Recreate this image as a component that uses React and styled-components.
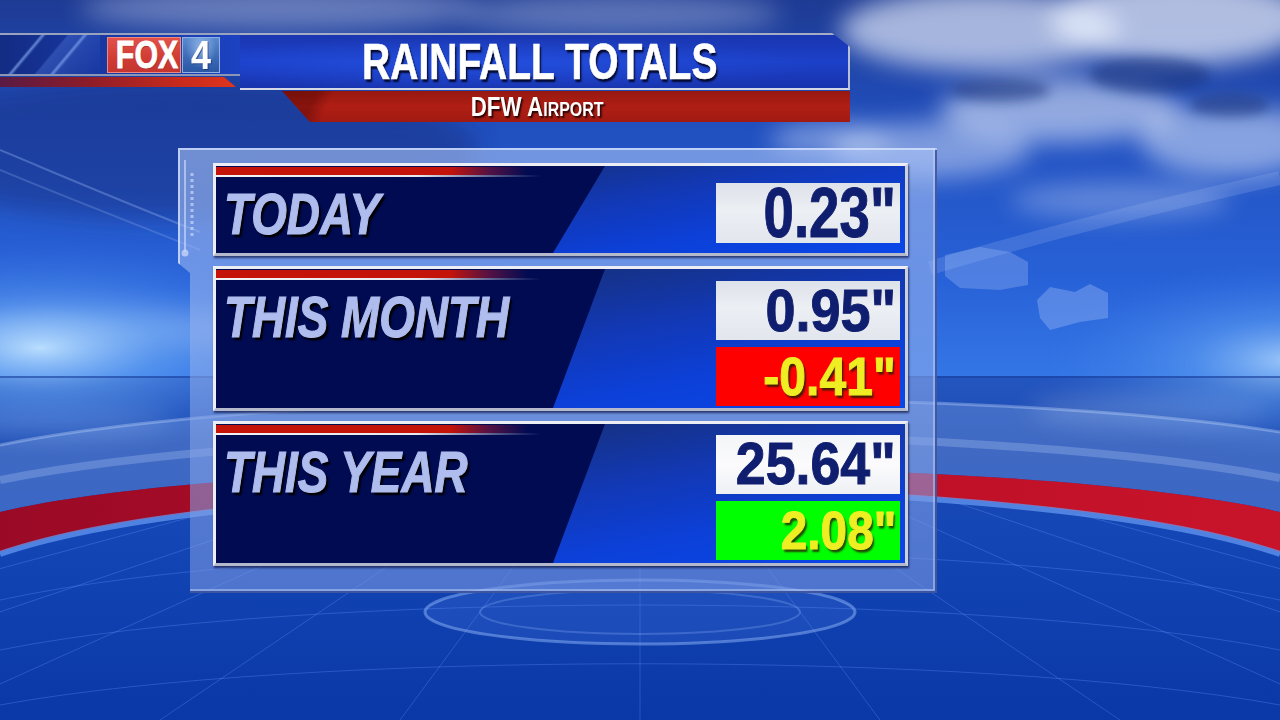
import React from 'react';
import styled, { createGlobalStyle } from 'styled-components';

const GlobalStyle = createGlobalStyle`
  html, body { margin: 0; padding: 0; width: 1280px; height: 720px; overflow: hidden; background: #0a3aa8; }
  body { font-family: "Liberation Sans", Arial, sans-serif; }
`;

const Stage = styled.div`
  position: relative;
  width: 1280px;
  height: 720px;
  overflow: hidden;
`;

const Backdrop = styled.svg`
  position: absolute;
  inset: 0;
  z-index: 0;
  display: block;
`;

const Content = styled.main`
  position: relative;
  z-index: 1;
  display: flex;
  flex-direction: column;
  padding-top: 33px;
`;

const Condensed = styled.span`
  display: inline-block;
  white-space: nowrap;
  transform: scaleX(${(p) => p.$sx || 0.8});
  transform-origin: ${(p) => p.$origin || 'center'} center;
`;

/* ---------- header ---------- */
const Header = styled.header`
  display: flex;
  flex-direction: column;
  width: 850px;
`;

const TopBar = styled.div`
  display: flex;
  height: 57px;
`;

const LeftWing = styled.div`
  width: 240px;
  display: flex;
  flex-direction: column;
`;

const WingStrip = styled.div`
  height: 43px;
  box-sizing: border-box;
  border-top: 2px solid #9aa3bd;
  border-bottom: 2px solid #8c96b4;
  display: flex;
  align-items: center;
  padding-left: 107px;
  background:
    linear-gradient(130deg, transparent 44%, rgba(150, 190, 255, 0.6) 48%, transparent 53%) 6px 0 / 44px 100% no-repeat,
    linear-gradient(130deg, transparent 44%, rgba(150, 190, 255, 0.55) 48%, transparent 53%) 48px 0 / 44px 100% no-repeat,
    linear-gradient(130deg, transparent 50%, rgba(90, 130, 230, 0.35) 52%, transparent 100%) 0 0 / 100px 100% no-repeat,
    linear-gradient(90deg, #132c84 0%, #1838a4 45%, #1c42c2 100%);
`;

const WingRed = styled.div`
  margin-top: 1px;
  height: 10px;
  background: linear-gradient(90deg, #5a1a44 0%, #8a1c2a 35%, #c82a1c 75%, #e0361e 100%);
  clip-path: polygon(0 0, 224px 0, 236px 100%, 0 100%);
`;

const Logo = styled.div`
  display: flex;
  gap: 1px;
  height: 36px;
`;

const FoxBox = styled.div`
  width: 74px;
  height: 36px;
  box-sizing: border-box;
  border: 1px solid #ec8a80;
  background: linear-gradient(180deg, #e2524a 0%, #d03c34 60%, #c43630 100%);
  color: #fff;
  font-weight: bold;
  font-size: 38px;
  line-height: 34px;
  text-align: center;
  -webkit-text-stroke: 0.8px #fff;
  text-shadow: 1px 1px 0 rgba(110, 10, 10, 0.5);
`;

const FourBox = styled.div`
  width: 38px;
  height: 36px;
  box-sizing: border-box;
  border: 1px solid #8fb0e0;
  background:
    radial-gradient(ellipse at 50% 30%, rgba(200, 225, 255, 0.55) 0%, transparent 60%),
    linear-gradient(180deg, #5a8ad0 0%, #3a68b4 60%, #2a58a4 100%);
  color: #fff;
  font-weight: bold;
  font-size: 40px;
  line-height: 35px;
  text-align: center;
  text-shadow: 1px 1px 0 rgba(10, 30, 90, 0.5);
`;

const TitleBox = styled.div`
  flex: 1;
  height: 57px;
  box-sizing: border-box;
  border-top: 2px solid #a4acc6;
  border-bottom: 2px solid #d4d8e4;
  border-right: 2px solid #b8c0d8;
  background:
    radial-gradient(ellipse at 40% 55%, rgba(40, 90, 240, 0.55) 0%, transparent 65%),
    linear-gradient(180deg, #1a36b0 0%, #1c40c8 50%, #1834ae 100%);
  clip-path: polygon(0 0, calc(100% - 18px) 0, 100% 14px, 100% 100%, 0 100%);
  display: flex;
  align-items: center;
  justify-content: center;
  padding-right: 8px;
`;

const Title = styled.h1`
  margin: 0;
  color: #fff;
  font-size: 50px;
  font-weight: bold;
  line-height: 1;
  -webkit-text-stroke: 0.6px #fff;
  text-shadow: 2px 3px 2px rgba(0, 0, 25, 0.85);
`;

const SubBar = styled.div`
  margin-left: 282px;
  margin-top: 1px;
  height: 31px;
  background:
    linear-gradient(115deg, rgba(60, 0, 0, 0.35) 0%, rgba(60, 0, 0, 0.35) 6%, transparent 9%),
    linear-gradient(180deg, #961810 0%, #b01e14 50%, #a01a12 100%);
  clip-path: polygon(0 0, 100% 0, 100% 100%, 28px 100%);
  display: flex;
  align-items: center;
  justify-content: center;
  padding-right: 58px;
`;

const Subtitle = styled.h2`
  margin: 0;
  color: #fff;
  font-size: 28px;
  font-weight: bold;
  font-variant: small-caps;
  line-height: 1;
  text-shadow: 2px 2px 2px rgba(20, 0, 0, 0.85);
`;

/* ---------- panel ---------- */
const Panel = styled.section`
  position: relative;
  margin-left: 178px;
  margin-top: 26px;
  width: 759px;
  height: 445px;
  box-sizing: border-box;
  padding: 15px 29px 27px 35px;
  display: flex;
  flex-direction: column;
  gap: 10px;
  background:
    linear-gradient(180deg, rgba(170, 195, 245, 0.6) 0%, rgba(140, 170, 235, 0.55) 60%, rgba(120, 150, 225, 0.6) 100%);
  box-shadow:
    inset 2px 2px 0 rgba(215, 228, 255, 0.75),
    inset -2px -2px 0 rgba(30, 50, 130, 0.7),
    inset -4px -4px 0 rgba(190, 210, 250, 0.5);
  clip-path: polygon(0 0, 100% 0, 100% 100%, 12px 100%, 12px 125px, 0 115px);
`;

const PanelDeco = styled.svg`
  position: absolute;
  left: 0;
  top: 0;
`;

const Row = styled.article`
  position: relative;
  width: 695px;
  height: ${(p) => p.$h}px;
  box-sizing: border-box;
  border: 3px solid;
  border-color: #eceef4 #cdd1dc #b4bacb #eceef4;
  background: #000b52;
  display: flex;
  flex-direction: column;
  box-shadow: 1px 2px 2px rgba(0, 0, 40, 0.6);

  &::before {
    content: '';
    position: absolute;
    inset: 0;
    clip-path: polygon(389px 0, 100% 0, 100% 100%, 337px 100%);
    background:
      linear-gradient(90deg, rgba(40, 90, 240, 0.35) 0%, transparent 30%),
      linear-gradient(170deg, #1d2a66 0%, #16307e 22%, #1238b4 50%, #0c40d8 75%, #0a46e8 100%);
  }
`;

const Stripe = styled.div`
  position: relative;
  margin-top: 1px;
  width: 325px;
  height: 10px;
  background:
    linear-gradient(90deg, #c4140a 0%, #c4140a 72%, rgba(120, 20, 60, 0.7) 84%, transparent 96%) top / 100% 8px no-repeat,
    linear-gradient(90deg, #f2f2f4 0%, #e8e8ee 62%, transparent 100%) bottom / 100% 2px no-repeat;
`;

const Body = styled.div`
  position: relative;
  flex: 1;
  display: flex;
  justify-content: space-between;
  align-items: flex-start;
  padding: 0 5px 0 8px;
`;

const Label = styled.h3`
  margin: 8px 0 0 0;
  color: #afbcee;
  font-size: 58px;
  font-weight: bold;
  font-style: italic;
  line-height: 1;
  -webkit-text-stroke: 1.2px #afbcee;
  text-shadow: 3px 3px 2px #000;
`;

const ValueCol = styled.div`
  display: flex;
  flex-direction: column;
  gap: 7px;
  width: 184px;
  margin-top: ${(p) => p.$offset}px;
`;

const tones = {
  light: {
    bg: 'linear-gradient(180deg, #dde1e9 0%, #eceff4 45%, #e2e6ed 100%)',
    color: '#0f1e6e',
    shadow: 'none',
  },
  white: {
    bg: 'linear-gradient(180deg, #f4f5f8 0%, #fbfbfd 50%, #eef0f4 100%)',
    color: '#0f1e6e',
    shadow: 'none',
  },
  red: {
    bg: '#ff0000',
    color: '#eeee22',
    shadow: '2px 3px 2px rgba(50, 30, 0, 0.9)',
  },
  green: {
    bg: '#00ff00',
    color: '#eeee22',
    shadow: '2px 3px 2px rgba(40, 40, 0, 0.85)',
  },
};

const ValueBox = styled.div`
  height: ${(p) => p.$h}px;
  background: ${(p) => tones[p.$tone].bg};
  color: ${(p) => tones[p.$tone].color};
  text-shadow: ${(p) => tones[p.$tone].shadow};
  -webkit-text-stroke: 1px ${(p) => tones[p.$tone].color};
  text-align: right;
  padding-right: 4px;
  font-size: ${(p) => p.$fs}px;
  font-weight: bold;
  line-height: ${(p) => p.$h}px;
  white-space: nowrap;
`;

const rows = [
  {
    label: 'TODAY',
    h: 93,
    offset: 6,
    values: [{ text: '0.23"', tone: 'light', fs: 71, sx: 0.77, h: 60 }],
  },
  {
    label: 'THIS MONTH',
    h: 145,
    offset: 1,
    values: [
      { text: '0.95"', tone: 'light', fs: 60, sx: 0.9, h: 59 },
      { text: '-0.41"', tone: 'red', fs: 54, sx: 0.89, h: 59 },
    ],
  },
  {
    label: 'THIS YEAR',
    h: 145,
    offset: 0,
    values: [
      { text: '25.64"', tone: 'white', fs: 59, sx: 0.91, h: 59 },
      { text: '2.08"', tone: 'green', fs: 53, sx: 0.9, h: 59 },
    ],
  },
];

function Scene() {
  const radials = [];
  for (let i = -12; i <= 12; i++) {
    radials.push(
      <line key={`r${i}`} x1={640 + i * 55} y1={470} x2={640 + i * 240} y2={720} />
    );
  }
  return (
    <Backdrop width="1280" height="720" viewBox="0 0 1280 720">
      <defs>
        <linearGradient id="sky" x1="0" y1="0" x2="0" y2="1">
          <stop offset="0" stopColor="#1e3b94" />
          <stop offset="0.35" stopColor="#2150c0" />
          <stop offset="0.75" stopColor="#2862d8" />
          <stop offset="1" stopColor="#3476e6" />
        </linearGradient>
        <linearGradient id="low" x1="0" y1="0" x2="0" y2="1">
          <stop offset="0" stopColor="#2456c0" />
          <stop offset="0.2" stopColor="#1c4ab0" />
          <stop offset="0.45" stopColor="#1446b6" />
          <stop offset="1" stopColor="#0a38a6" />
        </linearGradient>
        <radialGradient id="glow" cx="0.5" cy="0.5" r="0.5">
          <stop offset="0" stopColor="#bfe2ff" stopOpacity="0.95" />
          <stop offset="0.4" stopColor="#6aa8f4" stopOpacity="0.55" />
          <stop offset="1" stopColor="#3a78e8" stopOpacity="0" />
        </radialGradient>
        <linearGradient id="red" x1="0" y1="0" x2="1" y2="0">
          <stop offset="0" stopColor="#9a0a26" />
          <stop offset="0.5" stopColor="#b80e28" />
          <stop offset="1" stopColor="#c8142a" />
        </linearGradient>
        <filter id="b12" x="-50%" y="-50%" width="200%" height="200%">
          <feGaussianBlur stdDeviation="12" />
        </filter>
        <filter id="b6" x="-50%" y="-50%" width="200%" height="200%">
          <feGaussianBlur stdDeviation="6" />
        </filter>
        <clipPath id="floor">
          <path d="M0 556 C 250 468 1030 468 1280 556 L1280 720 L0 720 Z" />
        </clipPath>
      </defs>

      <rect x="0" y="0" width="1280" height="376" fill="url(#sky)" />
      <rect x="0" y="376" width="1280" height="344" fill="url(#low)" />

      <ellipse cx="180" cy="150" rx="300" ry="70" fill="#132a78" opacity="0.45" filter="url(#b12)" />

      <g filter="url(#b12)" fill="#eef4ff">
        <ellipse cx="280" cy="8" rx="200" ry="22" opacity="0.35" />
        <ellipse cx="620" cy="14" rx="160" ry="20" opacity="0.3" />
        <ellipse cx="980" cy="30" rx="140" ry="40" opacity="0.65" />
        <ellipse cx="1180" cy="20" rx="130" ry="45" opacity="0.7" />
        <ellipse cx="1060" cy="110" rx="120" ry="32" opacity="0.55" />
        <ellipse cx="1230" cy="140" rx="90" ry="36" opacity="0.5" />
        <ellipse cx="930" cy="150" rx="100" ry="28" opacity="0.45" />
        <ellipse cx="830" cy="140" rx="60" ry="18" opacity="0.4" />
        <ellipse cx="1120" cy="200" rx="110" ry="18" opacity="0.3" />
        <ellipse cx="120" cy="330" rx="160" ry="18" opacity="0.35" />
        <ellipse cx="1150" cy="410" rx="120" ry="16" opacity="0.22" />
        <ellipse cx="60" cy="420" rx="110" ry="14" opacity="0.18" />
      </g>
      <g filter="url(#b6)" fill="#16307c" opacity="0.55">
        <ellipse cx="1150" cy="75" rx="60" ry="18" />
        <ellipse cx="1230" cy="105" rx="40" ry="12" />
        <ellipse cx="1000" cy="90" rx="50" ry="12" />
      </g>

      <ellipse cx="40" cy="348" rx="300" ry="110" fill="url(#glow)" />
      <ellipse cx="1290" cy="360" rx="250" ry="100" fill="url(#glow)" opacity="0.8" />
      <rect x="0" y="376" width="1280" height="2" fill="#183f9e" opacity="0.6" />

      <path d="M930 268 C 1040 235, 1160 205, 1280 178" stroke="#a8c4f4" strokeOpacity="0.2" strokeWidth="14" fill="none" />
      <path d="M0 150 C 60 175, 130 205, 200 232" stroke="#9ab8f0" strokeOpacity="0.35" strokeWidth="2" fill="none" />
      <path d="M0 170 C 60 195, 130 222, 200 250" stroke="#9ab8f0" strokeOpacity="0.25" strokeWidth="2" fill="none" />
      <polygon points="945,255 980,247 1010,252 1028,262 1028,285 1000,290 960,288 945,276" fill="#a8c4f8" opacity="0.3" />
      <polygon points="1037,300 1050,287 1075,292 1090,284 1108,293 1108,318 1080,322 1050,330 1040,318" fill="#a8c4f8" opacity="0.35" />

      <path d="M0 445 C 300 385, 980 385, 1280 432 L1280 512 C 1030 452, 250 452, 0 512 Z" fill="#a8c4f8" opacity="0.26" />
      <path d="M0 445 C 300 385, 980 385, 1280 432" stroke="#c8dcff" strokeOpacity="0.35" strokeWidth="3" fill="none" />
      <path d="M0 480 C 300 420, 980 420, 1280 478" stroke="#c8dcff" strokeOpacity="0.25" strokeWidth="8" fill="none" />

      <path d="M0 512 C 250 452, 1030 452, 1280 512 L1280 552 C 1030 466, 250 466, 0 552 Z" fill="url(#red)" />
      <path d="M0 554 C 250 468, 1030 468, 1280 554" stroke="#6a9cf4" strokeOpacity="0.7" strokeWidth="6" fill="none" />

      <g clipPath="url(#floor)" stroke="#6e9cff" strokeOpacity="0.3" strokeWidth="1" fill="none">
        {radials}
        <path d="M0 600 C 300 535, 980 535, 1280 600" />
        <path d="M0 650 C 300 590, 980 590, 1280 650" />
        <path d="M0 705 C 300 650, 980 650, 1280 705" />
      </g>

      <ellipse cx="640" cy="612" rx="215" ry="32" fill="#5a8cf0" fillOpacity="0.18" stroke="#9cc0ff" strokeOpacity="0.45" strokeWidth="3" />
      <ellipse cx="640" cy="612" rx="160" ry="22" fill="none" stroke="#9cc0ff" strokeOpacity="0.25" strokeWidth="2" />
    </Backdrop>
  );
}

export default function App() {
  const dots = [];
  for (let y = 25; y <= 90; y += 6) {
    dots.push(<rect key={y} x="12.5" y={y} width="3" height="3" fill="#c4d4fa" opacity="0.75" />);
  }
  return (
    <>
      <GlobalStyle />
      <Stage>
        <Scene />
        <Content>
          <Header>
            <TopBar>
              <LeftWing>
                <WingStrip>
                  <Logo>
                    <FoxBox>
                      <Condensed $sx={0.8}>FOX</Condensed>
                    </FoxBox>
                    <FourBox>
                      <Condensed $sx={0.9}>4</Condensed>
                    </FourBox>
                  </Logo>
                </WingStrip>
                <WingRed />
              </LeftWing>
              <TitleBox>
                <Title>
                  <Condensed $sx={0.78}>RAINFALL TOTALS</Condensed>
                </Title>
              </TitleBox>
            </TopBar>
            <SubBar>
              <Subtitle>
                <Condensed $sx={0.8}>DFW Airport</Condensed>
              </Subtitle>
            </SubBar>
          </Header>

          <Panel>
            <PanelDeco width="24" height="112" viewBox="0 0 24 112">
              <line x1="7" y1="12" x2="7" y2="104" stroke="#c4d4fa" strokeOpacity="0.7" strokeWidth="2" />
              <circle cx="7" cy="105" r="3.5" fill="#c4d4fa" opacity="0.8" />
              {dots}
            </PanelDeco>
            {rows.map((r) => (
              <Row key={r.label} $h={r.h}>
                <Stripe />
                <Body>
                  <Label>
                    <Condensed $sx={0.79} $origin="left">{r.label}</Condensed>
                  </Label>
                  <ValueCol $offset={r.offset}>
                    {r.values.map((v) => (
                      <ValueBox key={v.text} $tone={v.tone} $fs={v.fs} $h={v.h}>
                        <Condensed $sx={v.sx} $origin="right">{v.text}</Condensed>
                      </ValueBox>
                    ))}
                  </ValueCol>
                </Body>
              </Row>
            ))}
          </Panel>
        </Content>
      </Stage>
    </>
  );
}
